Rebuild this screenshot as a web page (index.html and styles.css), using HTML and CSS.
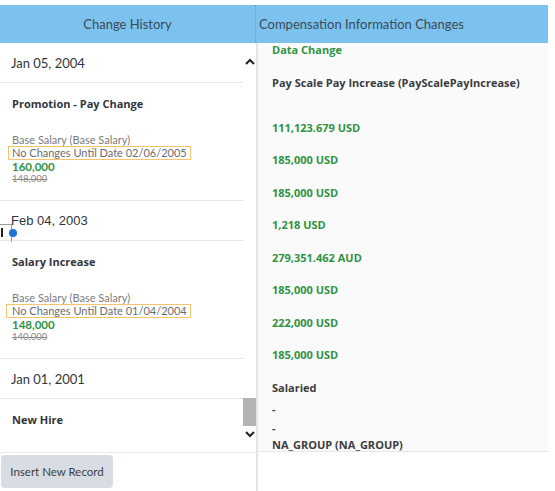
FILE: index.html
```html
<!DOCTYPE html>
<html>
<head>
<meta charset="utf-8">
<link rel="stylesheet" href="styles.css">
</head>
<body>
<div class="app">
  <div class="head head-left">Change History</div>
  <div class="head head-right">Compensation Information Changes</div>

  <div class="list">
    <div class="list-items">
      <div class="date-row">Jan 05, 2004</div>
      <div class="detail">
        <div class="title">Promotion - Pay Change</div>
        <div class="field">Base Salary (Base Salary)</div>
        <div class="note">No Changes Until Date 02/06/2005</div>
        <div class="new-val">160,000</div>
        <div class="old-val">148,000</div>
      </div>
      <div class="date-row date-alt">Feb 04, 2003</div>
      <div class="detail">
        <div class="title">Salary Increase</div>
        <div class="field">Base Salary (Base Salary)</div>
        <div class="note note-wide">No Changes Until Date 01/04/2004</div>
        <div class="new-val">148,000</div>
        <div class="old-val">140,000</div>
      </div>
      <div class="date-row">Jan 01, 2001</div>
      <div class="detail">
        <div class="title">New Hire</div>
      </div>
    </div>
    <div class="scroll">
      <svg class="arrow" width="10" height="7" viewBox="0 0 10 7"><path d="M1 6 L5 2 L9 6" fill="none" stroke="#222" stroke-width="2"/></svg>
      <div class="spacer"></div>
      <div class="thumb"></div>
      <svg class="arrow arrow-down" width="10" height="7" viewBox="0 0 10 7"><path d="M1 1 L5 5 L9 1" fill="none" stroke="#222" stroke-width="2"/></svg>
    </div>
    <div class="focus-box"><span class="focus-bar"></span></div>
    <div class="focus-dot"></div>
  </div>

  <div class="panel">
    <div class="pv green">Data Change</div>
    <div class="pv dark m19">Pay Scale Pay Increase (PayScalePayIncrease)</div>
    <div class="pv green m31">111,123.679 USD</div>
    <div class="pv green m18">185,000 USD</div>
    <div class="pv green m19">185,000 USD</div>
    <div class="pv green m18">1,218 USD</div>
    <div class="pv green m19">279,351.462 AUD</div>
    <div class="pv green m18">185,000 USD</div>
    <div class="pv green m19">222,000 USD</div>
    <div class="pv green m18">185,000 USD</div>
    <div class="pv dark m19">Salaried</div>
    <div class="pv dark m7">-</div>
    <div class="pv dark m5">-</div>
    <div class="pv dark m3">NA_GROUP (NA_GROUP)</div>
  </div>

  <div class="footer">
    <button class="btn">Insert New Record</button>
  </div>
  <div class="footer-right"></div>
</div>
</body>
</html>
```

FILE: styles.css
```css
html, body {
  margin: 0;
  padding: 0;
  background: #ffffff;
}
body {
  font-family: Lato, "Open Sans", sans-serif;
  color: #32363a;
}
.app {
  padding-top: 5px;
  width: 548px;
  display: grid;
  grid-template-columns: 256px 292px;
  grid-template-rows: 38px 409px 39px;
}
.head {
  background: #7cc2ef;
  color: #3d4a54;
  font-size: 13px;
  display: flex;
  align-items: center;
}
.head-left {
  justify-content: center;
  border-right: 1px dotted #5f9fcc;
  box-sizing: border-box;
}
.head-right {
  padding-left: 3px;
}
.list {
  display: flex;
  position: relative;
  overflow: hidden;
  background: #fff;
}
.list-items {
  width: 243px;
  flex: none;
}
.date-row {
  height: 40px;
  box-sizing: border-box;
  border-bottom: 1px solid #e6e6e6;
  padding-left: 11px;
  font-size: 13px;
  display: flex;
  align-items: center;
  color: #32363a;
}
.date-alt {
  font-family: "Liberation Sans", Arial, sans-serif;
  align-items: flex-start;
  padding-top: 12px;
}
.detail {
  height: 118px;
  box-sizing: border-box;
  border-bottom: 1px solid #e6e6e6;
  padding: 14px 0 0 12px;
  font-size: 11px;
}
.title {
  font-family: "Open Sans", Lato, sans-serif;
  font-weight: bold;
  line-height: 14px;
  font-size: 11px;
  color: #32363a;
}
.field {
  margin-top: 22px;
  line-height: 13px;
  color: #7a7d80;
  font-size: 11px;
}
.note {
  display: inline-block;
  line-height: 12px;
  border: 1px solid #f5c46c;
  color: #6a6d70;
  font-size: 11px;
  margin-left: -4px;
  padding: 0 3px 0 3px;
}
.note-wide {
  margin-left: -6px;
  padding-left: 5px;
}
.new-val {
  color: #2f9343;
  font-weight: bold;
  line-height: 13px;
  font-size: 11.5px;
}
.old-val {
  color: #8a8a8a;
  text-decoration: line-through;
  line-height: 12px;
  font-size: 9.5px;
}
.scroll {
  width: 13px;
  flex: none;
  display: flex;
  flex-direction: column;
  align-items: center;
  padding: 15px 0 14px;
  box-sizing: border-box;
}
.arrow {
  display: block;
  flex: none;
}
.spacer {
  flex: 1;
}
.thumb {
  width: 13px;
  height: 28px;
  background: #b3b3b3;
  margin-bottom: 5px;
  flex: none;
}
.focus-box {
  position: absolute;
  left: 0;
  top: 181px;
  width: 11px;
  height: 17px;
  border-top: 1px solid #9a9a9a;
  border-right: 1px solid #9a9a9a;
}
.focus-bar {
  position: absolute;
  left: 1px;
  top: 3px;
  width: 2px;
  height: 9px;
  background: #222;
}
.focus-dot {
  position: absolute;
  left: 9px;
  top: 186px;
  width: 8px;
  height: 8px;
  border-radius: 50%;
  background: #1b76d6;
}
.panel {
  background: #fafafa;
  border-left: 2px solid #e4e4e4;
  border-bottom: 1px solid #e8e8e8;
  padding-left: 14px;
  font-family: "Open Sans", Lato, sans-serif;
  font-size: 11px;
  font-weight: bold;
  overflow: hidden;
}
.pv {
  line-height: 14px;
}
.green { color: #2f9343; }
.dark { color: #3a3d40; }
.m3 { margin-top: 3px; }
.m5 { margin-top: 5px; }
.m7 { margin-top: 7px; }
.m18 { margin-top: 18px; }
.m19 { margin-top: 19px; }
.m31 { margin-top: 31px; }
.footer {
  border-top: 1px solid #e8e8e8;
  padding: 2px 0 0 1px;
}
.footer-right {
  border-left: 2px solid #e4e4e4;
}
.btn {
  width: 112px;
  height: 33px;
  border: none;
  border-radius: 4px;
  background: #d8dde3;
  color: #3a3d40;
  font-family: Lato, "Open Sans", sans-serif;
  font-size: 11.5px;
  padding: 0;
}
```
